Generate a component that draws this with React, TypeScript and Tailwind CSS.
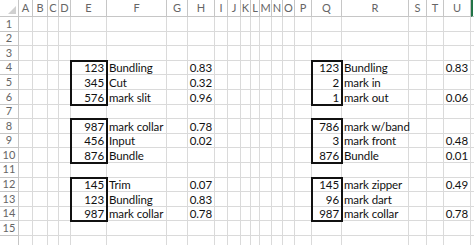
import { Fragment } from 'react'

const columns = ['A', 'B', 'C', 'D', 'E', 'F', 'G', 'H', 'I', 'J', 'K', 'L', 'M', 'N', 'O', 'P', 'Q', 'R', 'S', 'T', 'U']
const rows = Array.from({ length: 16 }, (_, i) => i + 1)

const sheetGrid =
  'grid grid-cols-[19px_14px_15px_11px_12px_36px_60px_21px_27px_13px_13px_10px_9px_12px_11px_12px_17px_30px_67px_18px_17px_27px_3px] grid-rows-[17px_repeat(15,14.6px)_12px]'

// cell contents, keyed by address
const cells: Record<string, string> = {
  E4: '123', F4: 'Bundling', H4: '0.83', Q4: '123', R4: 'Bundling', U4: '0.83',
  E5: '345', F5: 'Cut', H5: '0.32', Q5: '2', R5: 'mark in',
  E6: '576', F6: 'mark slit', H6: '0.96', Q6: '1', R6: 'mark out', U6: '0.06',
  E8: '987', F8: 'mark collar', H8: '0.78', Q8: '786', R8: 'mark w/band',
  E9: '456', F9: 'Input', H9: '0.02', Q9: '3', R9: 'mark front', U9: '0.48',
  E10: '876', F10: 'Bundle', Q10: '876', R10: 'Bundle', U10: '0.01',
  E12: '145', F12: 'Trim', H12: '0.07', Q12: '145', R12: 'mark zipper', U12: '0.49',
  E13: '123', F13: 'Bundling', H13: '0.83', Q13: '96', R13: 'mark dart',
  E14: '987', F14: 'mark collar', H14: '0.78', Q14: '987', R14: 'mark collar', U14: '0.78'
}

const textCols = ['F', 'R']

function Cell({ col, row }: { col: string; row: number }) {
  const value = cells[`${col}${row}`]
  const left = textCols.includes(col)
  return (
    <div
      className={`flex items-center overflow-visible whitespace-nowrap border-b border-r border-[#dadada] px-[2px] pt-px text-[11.5px] leading-none tracking-[-0.1px] text-[#111] ${
        left ? 'justify-start' : 'justify-end'
      }`}
    >
      {value}
    </div>
  )
}

function Box({ className }: { className: string }) {
  return <div className={`-m-px border-2 border-[#111] ${className}`} />
}

export default function App() {
  return (
    <div className="h-[245px] w-[474px] overflow-hidden bg-white font-['Lato',sans-serif]">
      <div className="grid">
        <div className={`${sheetGrid} col-start-1 row-start-1`}>
          <div className="relative border-b border-r border-[#c6c6c6]">
            <svg className="absolute bottom-[2px] right-[2px]" width="8" height="8" viewBox="0 0 8 8">
              <path d="M8 0V8H0Z" fill="#d0d0d0" />
            </svg>
          </div>
          {columns.map((c) => (
            <div
              key={c}
              className="flex items-center justify-center border-b border-r border-[#c6c6c6] text-[11px] text-[#666]"
            >
              {c}
            </div>
          ))}
          <div className="border-b border-l-2 border-[#c6c6c6] border-l-[#217346]" />

          {rows.map((r) => (
            <Fragment key={r}>
              <div className="flex items-center justify-center border-b border-r border-[#c6c6c6] text-[11px] text-[#666]">
                {r < 16 ? r : ''}
              </div>
              {columns.map((c) => (
                <Cell key={c} col={c} row={r} />
              ))}
              <div className="border-b border-[#dadada]" />
            </Fragment>
          ))}
        </div>

        {/* thick outlines around the number blocks */}
        <div className={`${sheetGrid} pointer-events-none col-start-1 row-start-1`}>
          <Box className="col-start-6 row-start-5 row-span-3" />
          <Box className="col-start-6 row-start-9 row-span-3" />
          <Box className="col-start-6 row-start-13 row-span-3" />
          <Box className="col-start-18 row-start-5 row-span-3" />
          <Box className="col-start-18 row-start-9 row-span-3" />
          <Box className="col-start-18 row-start-13 row-span-3" />
        </div>
      </div>
    </div>
  )
}
